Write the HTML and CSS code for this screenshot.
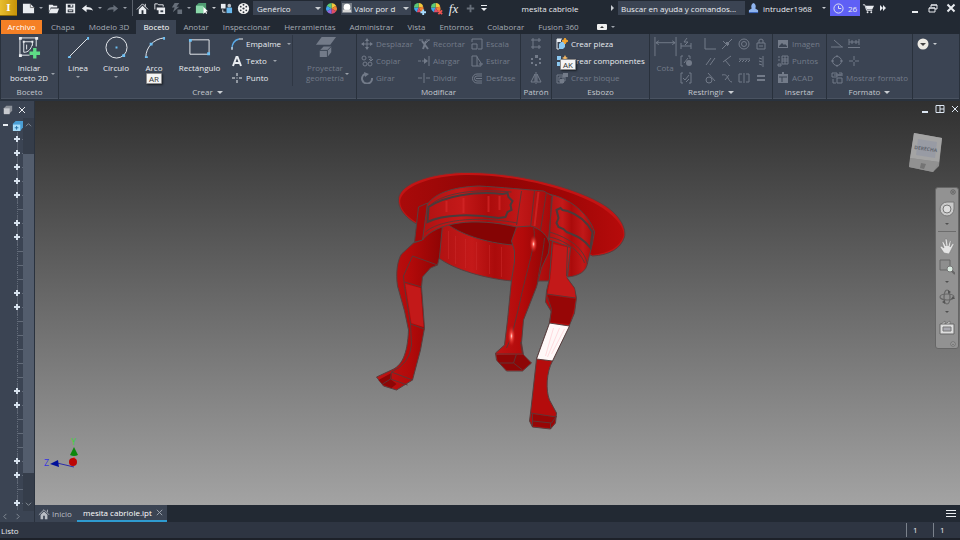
FILE: index.html
```html
<!DOCTYPE html>
<html lang="es">
<head>
    <meta charset="UTF-8">
    <meta name="viewport" content="width=device-width, initial-scale=1.0">
    <title>mesita cabriole</title>
    <link rel="stylesheet" href="styles.css">
</head>
<body>

    <!-- Barra de título -->
    <header class="titlebar">
        <button class="logo" aria-label="Menú">I</button>
        <button class="tool" aria-label="Nuevo"><svg viewBox="0 0 14 14"><path class="solid" d="M1 2h8l4 4v6H1z"/><path d="M9 2v4h4" fill="none" stroke="#777"/></svg></button>
        <span class="caret dim"></span>
        <button class="tool" aria-label="Abrir"><svg viewBox="0 0 14 14"><path class="solid" d="M2 3h4l1 1h4v2H4l-2 5zM4 7h9l-2 5H2z"/></svg></button>
        <button class="tool" aria-label="Guardar"><svg viewBox="0 0 14 14"><path class="solid" fill-rule="evenodd" d="M2 2h10v10H2zM4 3v3h6V3zM4 8v3h6V8z"/><path class="solid" d="M7 3h2v2H7zM5 9h4v1H5z"/></svg></button>
        <button class="tool" aria-label="Deshacer"><svg viewBox="0 0 14 14"><path class="solid" d="M1 7l5-4v2.500c4 0 6 1 7 4-2-1.500-4-1.500-7-1.500v3z"/></svg></button>
        <span class="caret dim"></span>
        <button class="tool off" aria-label="Rehacer"><svg viewBox="0 0 14 14"><path class="solid" d="M13 7L8 3v2.500c-4 0-6 1-7 4 2-1.500 4-1.500 7-1.500v3z"/></svg></button>
        <span class="caret dim"></span>
        <span class="tool-sep"></span>
        <button class="tool" aria-label="Inicio"><svg viewBox="0 0 14 14"><path d="M1 8l6-6 6 6M10 2v3" class="line"/><path class="solid" d="M3 8l4-4 4 4v5H8V9H6v4H3z"/></svg></button>
        <button class="tool" aria-label="Equipo"><svg viewBox="0 0 14 14"><path class="line" d="M2 8V2h3l1 1h5v2"/><path class="solid" d="M4 6h9v7H6V9H4z"/><path d="M8 9h3v2H8z" fill="#333b46"/></svg></button>
        <button class="tool off" aria-label="Actualizar"><svg viewBox="0 0 14 14"><path class="solid" d="M5 1h5L7 5h3l-7 6 2-5H2zM8 8h5v5H8z"/></svg></button>
        <span class="caret dim"></span>
        <button class="tool" aria-label="Seleccionar"><svg viewBox="0 0 14 14"><path d="M1 4l3-3h8v8l-2 3H1z" fill="#4e9b71"/><path d="M1 4h8v8H1z" fill="#8bd9aa"/><path d="M9 5v8l2-2 1 2 1-1-1-2h2z" fill="#fff"/></svg></button>
        <span class="caret"></span>
        <button class="tool" aria-label="Material"><svg viewBox="0 0 14 14"><path class="solid" d="M1 2h5v5H1z"/><circle cx="10" cy="4" r="2" fill="#b8bec5"/><path d="M7 6h6v6H7z" fill="#69b9ee"/><path class="line" d="M3 8v3h3"/></svg></button>
        <button class="tool" aria-label="Apariencia"><svg viewBox="0 0 14 14"><circle cx="7" cy="7" r="6" fill="#f4f4f4"/><g fill="#30363f"><circle cx="7" cy="7" r="1.200"/><circle cx="4" cy="5" r="1"/><circle cx="7" cy="3" r="1"/><circle cx="10" cy="5" r="1"/><circle cx="10" cy="9" r="1"/><circle cx="7" cy="11" r="1"/><circle cx="4" cy="9" r="1"/></g></svg></button>
        <label class="picker"><select aria-label="Material"><option>Genérico</option></select><span class="caret"></span></label>
        <button class="tool" aria-label="Color"><svg viewBox="0 0 14 14"><path d="M7 7V1a6 6 0 0 1 5 3z" fill="#f0c83c"/><path d="M7 7l5-3a6 6 0 0 1 0 6z" fill="#f08233"/><path d="M7 7l5 3a6 6 0 0 1-5 3z" fill="#df4c69"/><path d="M7 7v6a6 6 0 0 1-5-3z" fill="#8c6be0"/><path d="M7 7l-5 3a6 6 0 0 1 0-6z" fill="#3fa3ec"/><path d="M7 7L2 4a6 6 0 0 1 5-3z" fill="#59c976"/></svg></button>
        <label class="picker"><svg class="swatch" viewBox="0 0 12 12"><path d="M0 0h12v12H0z" fill="#777e87"/><circle cx="6" cy="5" r="4" fill="#fff"/><path d="M1 8h10v3H1z" fill="#d5d5d5"/></svg><select aria-label="Apariencia"><option>Valor por d</option></select><span class="caret"></span></label>
        <button class="tool" aria-label="Ajustar"><svg viewBox="0 0 14 14"><path d="M6 6V1a5 5 0 0 1 5 4z" fill="#f0c83c"/><path d="M6 6l5-1a5 5 0 0 1-2 6z" fill="#f08233"/><path d="M6 6l3 5H4z" fill="#df4c69"/><path d="M6 6l-2 5a6 6 0 0 1-3-5z" fill="#3fa3ec"/><path d="M6 6H1a5 5 0 0 1 5-5z" fill="#59c976"/><path d="M8 11h6M11 8v6" stroke="#a7dcff" stroke-width="2"/></svg></button>
        <button class="tool" aria-label="Borrar"><svg viewBox="0 0 14 14"><path d="M6 6V1a5 5 0 0 1 5 4z" fill="#f0c83c"/><path d="M6 6l5-1a5 5 0 0 1-2 6z" fill="#f08233"/><path d="M6 6l3 5H4z" fill="#df4c69"/><path d="M6 6l-2 5a6 6 0 0 1-3-5z" fill="#3fa3ec"/><path d="M6 6H1a5 5 0 0 1 5-5z" fill="#59c976"/><path d="M9 9l4 4M13 9l-4 4" stroke="#ef5350" stroke-width="2"/></svg></button>
        <button class="tool fx" aria-label="Parámetros">fx</button>
        <button class="tool off" aria-label="Añadir"><svg viewBox="0 0 14 14"><path d="M3 7h8M7 3v8" class="line thick"/></svg></button>
        <button class="more" aria-label="Personalizar"><svg viewBox="0 0 8 8"><path class="line" d="M1 1.500h6"/><path class="solid" d="M1 4h6L4 7z"/></svg></button>
        <h1 class="doc-title">mesita cabriole</h1>
        <span class="side-caret"></span>
        <input class="search" type="text" aria-label="Buscar" value="Buscar en ayuda y comandos...">
        <button class="user"><svg viewBox="0 0 12 12"><path d="M6 0a3 4 0 0 1 2 6l3 2v2H1V8l3-2a3 4 0 0 1 2-6z" fill="#8fb4ee"/><path d="M1 10h10v1H1z" fill="#3f6fd0"/></svg>intruder1968<span class="caret"></span></button>
        <button class="trial"><svg viewBox="0 0 12 12"><circle cx="6" cy="6" r="5" class="line"/><path class="line" d="M6 3v3h3"/></svg>26</button>
        <button class="tool cart" aria-label="Tienda"><svg viewBox="0 0 14 14"><path class="line" d="M1 3h2l2 6h6"/><path class="solid" d="M4 4h9l-2 4H5z"/><circle class="solid" cx="6" cy="11" r="1"/><circle class="solid" cx="10" cy="11" r="1"/></svg></button>
        <button class="next" aria-label="Más"><svg viewBox="0 0 8 8"><path class="solid" d="M1 1l3 3-3 3zM4 1l3 3-3 3z"/></svg></button>
        <div class="window-buttons">
            <button aria-label="Minimizar"><svg viewBox="0 0 10 10"><path d="M2 9h6" class="line thick"/></svg></button>
            <button aria-label="Restaurar"><svg viewBox="0 0 10 10"><path d="M3 4V2h6v4H7M1 5h6v4H1zM3 2h6M1 5h6" class="line"/></svg></button>
            <button aria-label="Cerrar"><svg viewBox="0 0 10 10"><path d="M1.500 1.500l7 7M8.500 1.500l-7 7" class="line thick"/></svg></button>
        </div>
    </header>

    <!-- Fichas de la cinta -->
    <nav class="tabs">
        <a class="file" href="#">Archivo</a>
        <a href="#">Chapa</a>
        <a href="#">Modelo 3D</a>
        <a class="active" href="#">Boceto</a>
        <a href="#">Anotar</a>
        <a href="#">Inspeccionar</a>
        <a href="#">Herramientas</a>
        <a href="#">Administrar</a>
        <a href="#">Vista</a>
        <a href="#">Entornos</a>
        <a href="#">Colaborar</a>
        <a href="#">Fusion 360</a>
        <button class="collapse" aria-label="Minimizar cinta"><svg viewBox="0 0 10 6"><rect width="10" height="6" rx="1" fill="#f1f1f1"/><path d="M3 4l2-2 2 2z" fill="#333"/></svg><span class="caret dim"></span></button>
    </nav>

    <!-- Cinta de opciones -->
    <div class="ribbon">
        <section class="panel p-boceto">
            <div class="panel-body">
                <button class="big"><svg viewBox="0 0 24 24"><path class="line" d="M3 2h16v9M2 3v17h10M6 6h9v4M6 6v11M6 17c5 0 7-3 9-8M9 9v5"/><g class="solid"><path d="M1 1h3v3H1zM18 1h3v3h-3zM1 19h3v3H1zM5 5h2v2H5zM14 5h2v2h-2z"/></g><path d="M12 18h11M17.500 12.500v11" stroke="#5edc86" stroke-width="3.500"/></svg>Iniciar<br>boceto 2D</button>
                <span class="caret dim low"></span>
            </div>
            <h2>Boceto</h2>
        </section>

        <section class="panel p-crear">
            <div class="panel-body">
                <button class="big"><svg viewBox="0 0 24 24"><path class="line" d="M2 22L22 2"/><path class="dot" d="M1 21h3v2H1zM21 1h2v3h-2z"/></svg>Línea<span class="caret dim"></span></button>
                <button class="big"><svg viewBox="0 0 24 24"><circle class="line" cx="12" cy="12" r="11"/><path class="dot" d="M11 11h2v2h-2zM18 19h3v3h-3z"/></svg>Círculo<span class="caret dim"></span></button>
                <button class="big arc"><svg viewBox="0 0 24 24"><path class="line" d="M3 22C3 12 11 3 22 2"/><path class="dot" d="M2 21h3v2H2zM7 7h3v3H7zM21 1h2v3h-2z"/></svg>Arco<span class="keytip">AR</span></button>
                <button class="big wide"><svg viewBox="0 0 24 24"><path class="line" d="M2 4h20v15H2z"/><path class="dot" d="M1 3h3v3H1zM20 17h3v3h-3z"/></svg>Rectángulo<span class="caret dim"></span></button>
                <div class="stack">
                    <button><svg viewBox="0 0 12 12"><path d="M1 11C1 5 4 2 8 1" fill="none" stroke="#5aa9e6" stroke-width="1.300"/><path class="line" d="M8 1h4M1 9v3"/></svg>Empalme<span class="caret dim"></span></button>
                    <button><svg viewBox="0 0 12 12"><path class="line thick" d="M2 11L5.500 2h1L10 11M4 8h5"/></svg>Texto<span class="caret dim"></span></button>
                    <button><svg viewBox="0 0 12 12"><path class="line" d="M6 1v3M6 8v3M1 6h3M8 6h3M5.500 6h1"/></svg>Punto</button>
                </div>
                <div class="project off">
                    <button class="big" disabled><svg viewBox="0 0 24 24"><path class="solid" d="M8 1h15l-6 8H2zM6 15l4-4h8v6l-4 5H6z"/><path d="M6 15h8v7M14 15l4-4" fill="none" stroke="#3b4453"/></svg>Proyectar<br>geometría</button>
                    <span class="caret dim low"></span>
                </div>
            </div>
            <h2>Crear <span class="caret"></span></h2>
        </section>

        <section class="panel p-modificar off">
            <div class="panel-body grid">
                <button disabled><svg viewBox="0 0 12 12"><path class="line" d="M6 1v10M1 6h10"/><path class="solid" d="M4 3l2-3 2 3zM4 9l2 3 2-3zM3 4L0 6l3 2zM9 4l3 2-3 2z"/></svg>Desplazar</button>
                <button disabled><svg viewBox="0 0 12 12"><path class="line thick" d="M4 3l6 8M8 3l-3 8"/><path class="line" d="M1 2h4M8 2h4M6 7l5-5"/></svg>Recortar</button>
                <button disabled><svg viewBox="0 0 12 12"><path class="line" d="M1 4V1h10v10H7M1 6h5v5H1z"/></svg>Escala</button>
                <button disabled><svg viewBox="0 0 12 12"><circle class="line" cx="3" cy="3" r="2"/><circle class="line" cx="4" cy="9" r="2"/><circle class="line" cx="9" cy="9" r="2"/><path class="line" d="M7 2h3v3M8 4l2 2 2-2"/></svg>Copiar</button>
                <button disabled><svg viewBox="0 0 12 12"><path class="line" d="M0 6h3M4 6h4M11 1v10"/><path class="solid" d="M6 3l4 3-4 3z"/></svg>Alargar</button>
                <button disabled><svg viewBox="0 0 12 12"><path class="line" d="M1 1h5v10H1zM6 2l4 6v3H6M8 9h4"/></svg>Estirar</button>
                <button disabled><svg viewBox="0 0 12 12"><path class="line thick" d="M4 2a5 5 0 1 0 7 4"/><path class="solid" d="M3 0l5 2-4 3z"/></svg>Girar</button>
                <button disabled><svg viewBox="0 0 12 12"><path class="line" d="M0 6h4M8 6h4M6 1v10"/></svg>Dividir</button>
                <button disabled><svg viewBox="0 0 12 12"><path class="line" d="M11 2H6a4 4 0 0 0 0 9h5M11 4H6a2 2 0 0 0 0 5h5M5 6.500h6"/></svg>Desfase</button>
            </div>
            <h2>Modificar</h2>
        </section>

        <section class="panel p-patron off">
            <div class="panel-body icons">
                <button disabled aria-label="Rectangular"><svg viewBox="0 0 12 12"><path class="line" d="M2 1h2v2H2zM8 1h2v2H8zM2 8h2v2H2zM8 8h2v2H8zM5 2h2M3 4v3M5 9h2"/></svg></button>
                <button disabled aria-label="Circular"><svg viewBox="0 0 12 12"><path class="solid" d="M5 0h3v3H5zM1 3h2v2H1zM9 3h2v2H9zM1 7h2v2H1zM9 7h2v2H9zM5 9h2v2H5z"/></svg></button>
                <button disabled aria-label="Simetría"><svg viewBox="0 0 12 12"><path class="line" d="M5 2v8H1zM7 2v8h4zM6 0v12"/></svg></button>
            </div>
            <h2>Patrón</h2>
        </section>

        <section class="panel p-esbozo">
            <div class="panel-body stack">
                <button><svg viewBox="0 0 12 12"><path class="line" d="M6 1H1v10h2"/><path d="M3 6l2-2h4v5l-2 2H3z" fill="#8bc9f2"/><path class="solid" d="M1 1h4v3H1z"/><path d="M9 0l1 2 2 1-2 1-1 2-1-2-2-1 2-1z" fill="#f9a72b" stroke="#f9a72b"/></svg>Crear pieza</button>
                <button><svg viewBox="0 0 12 12"><path d="M1 1h4v4H1zM1 7h4v4H1z" fill="#8bc9f2"/><path d="M5 6h5v5H5z" fill="#4d9bd2"/><path d="M9 0l1 2 2 1-2 1-1 2-1-2-2-1 2-1z" fill="#f4b865"/></svg>Crear componentes<span class="keytip">AK</span></button>
                <button class="off" disabled><svg viewBox="0 0 12 12"><path class="line" d="M1 3h6v8H1zM3 5h6v4H3z"/><path class="solid" d="M7 1h5v4H7zM4 7h4v4H4z"/></svg>Crear bloque</button>
            </div>
            <h2>Esbozo</h2>
        </section>

        <section class="panel p-restringir off">
            <div class="panel-body">
                <button class="big cota" disabled><svg viewBox="0 0 24 24"><path class="line" d="M1 1v20M23 1v20M2 7h20M5 5L2 7l3 2M19 5l3 2-3 2"/></svg>Cota</button>
                <div class="icons">
                    <button disabled aria-label="Cota automática"><svg viewBox="0 0 12 12"><path class="line" d="M1 5v6M11 5v6M1 8h10M7 0L4 4h4L5 7"/></svg></button>
                    <button disabled aria-label="Mostrar restricciones"><svg viewBox="0 0 12 12"><path class="line" d="M3 1H1v10h2M8 1h2v3M4 8l4-5"/><circle class="solid" cx="9" cy="8" r="3"/></svg></button>
                    <button disabled aria-label="Inferencia"><svg viewBox="0 0 12 12"><path class="line" d="M3 1H1v10h2M9 1h2v10H9M3 6l2 2 4-5M6 10l3-3"/></svg></button>
                </div>
                <div class="icons four">
                    <button disabled aria-label="Coincidente"><svg viewBox="0 0 12 12"><path class="line" d="M1 0v11h11"/></svg></button>
                    <button disabled aria-label="Colineal"><svg viewBox="0 0 12 12"><path class="line" d="M1 11L11 1M2 3l5 5"/><path class="solid" d="M5 4h3v3H5z"/></svg></button>
                    <button disabled aria-label="Concéntrica"><svg viewBox="0 0 12 12"><circle class="line" cx="6" cy="6" r="5"/><circle class="line" cx="6" cy="6" r="2.500"/></svg></button>
                    <button disabled aria-label="Fijar"><svg viewBox="0 0 12 12"><path class="line" d="M2 5h8v6H2zM4 5V2q2-2 4 0v3M4 8h4"/></svg></button>
                    <button disabled aria-label="Paralela"><svg viewBox="0 0 12 12"><path class="line" d="M2 10l5-7M6 10l5-7"/></svg></button>
                    <button disabled aria-label="Perpendicular"><svg viewBox="0 0 12 12"><path class="line" d="M2 7l8-6M4 5l5 6"/></svg></button>
                    <button disabled aria-label="Horizontal"><svg viewBox="0 0 12 12"><path class="line" d="M1 4h11M1 7l2-2M4 7l2-2M7 7l2-2M10 7l2-2"/></svg></button>
                    <button disabled aria-label="Vertical"><svg viewBox="0 0 12 12"><path class="line" d="M8 1v11M4 3l3 1M4 6l3 1M4 9l3 1"/></svg></button>
                    <button disabled aria-label="Tangente"><svg viewBox="0 0 12 12"><circle class="line" cx="5" cy="8" r="3"/><path class="line" d="M4 1l7 8"/></svg></button>
                    <button disabled aria-label="Suave"><svg viewBox="0 0 12 12"><path class="line" d="M1 3c4-1 5 1 6 3s2 4 4 4M4 8l4-5"/></svg></button>
                    <button disabled aria-label="Simétrica"><svg viewBox="0 0 12 12"><path class="line" d="M4 2H1v8h3M8 2h3v8H8M6 1v10"/></svg></button>
                    <button disabled aria-label="Igual"><svg viewBox="0 0 12 12"><path class="line thick" d="M2 4h8M2 8h8"/></svg></button>
                </div>
            </div>
            <h2>Restringir <span class="caret"></span></h2>
        </section>

        <section class="panel p-insertar off">
            <div class="panel-body stack">
                <button disabled><svg viewBox="0 0 12 12"><path class="solid" d="M1 2h10v8H1z"/><path d="M2 8l3-3 2 2 1-1 2 2v1H2z" fill="#3b4453"/></svg>Imagen</button>
                <button disabled><svg viewBox="0 0 12 12"><path class="line" d="M5 1h6v8H5zM5 4h6M5 6h6M8 1v8M1 2h2M1 5h2M1 9h3v2H1z"/></svg>Puntos</button>
                <button disabled><svg viewBox="0 0 12 12"><path class="solid" d="M1 2h4V0h2v2h4v9H1z"/><path d="M2 5h8M5 5v5" stroke="#3b4453"/></svg>ACAD</button>
            </div>
            <h2>Insertar</h2>
        </section>

        <section class="panel p-formato off">
            <div class="panel-body stack">
                <div class="row">
                    <button disabled aria-label="Construcción"><svg viewBox="0 0 12 12"><path class="line" d="M3 2l8 7M0 9h12"/></svg></button>
                    <button disabled aria-label="Cota conducida"><svg viewBox="0 0 12 12"><path class="line" d="M1 1v6M11 1v6M1 4h10M4 2v4M8 2v4M0 9.500h12"/></svg></button>
                </div>
                <div class="row">
                    <button disabled aria-label="Línea de eje"><svg viewBox="0 0 12 12"><circle class="line" cx="6" cy="6" r="4.500"/><path class="line" d="M0 6h3M9 6h3M6 0v2M6 10v2"/></svg></button>
                    <button disabled aria-label="Punto central"><svg viewBox="0 0 12 12"><path class="line" d="M6 1v4M6 7v4M1 6h4M7 6h4"/></svg></button>
                </div>
                <button disabled><svg viewBox="0 0 12 12"><path class="line" d="M1 1h5v4H1zM6 6h5v5H6zM2 7v4h3M8 1h3v3M7 3h4M3 3h7"/></svg>Mostrar formato</button>
            </div>
            <h2>Formato <span class="caret"></span></h2>
        </section>

        <section class="panel p-fin">
            <button class="finish" aria-label="Terminar"><svg viewBox="0 0 12 12"><circle cx="6" cy="6" r="5.500" fill="#eceae4"/><path d="M3 5h6L6 8z" fill="#444"/></svg><span class="caret"></span></button>
        </section>
    </div>

    <div class="workspace">
        <!-- Navegador del modelo -->
        <aside class="browser">
            <div class="browser-head">
                <svg viewBox="0 0 12 12"><path d="M1 4l3-3h7v6l-3 3H1z" fill="#8b9098"/><path d="M1 4h7v7H1z" fill="#c8cbd0"/></svg>
                <button aria-label="Cerrar navegador"><svg viewBox="0 0 10 10"><path class="line" d="M2 2l6 6M8 2l-6 6"/></svg></button>
            </div>
            <div class="browser-body">
                <ul class="tree">
                    <li class="root"><i></i><svg viewBox="0 0 12 12"><path d="M1 4l3-3h8v7l-3 4H1z" fill="#4a9ed4"/><path d="M1 5h8v7H1z" fill="#a6dcfa"/><path d="M3 8.500h4M5 6.500v4" stroke="#226b9e"/></svg></li>
                    <li class="node"></li>
                    <li class="node"></li>
                    <li class="node"></li>
                    <li class="node"></li>
                    <li class="node"></li>
                    <li></li>
                    <li class="node"></li>
                    <li class="node"></li>
                    <li></li>
                    <li></li>
                    <li></li>
                    <li class="node"></li>
                    <li class="node"></li>
                    <li></li>
                    <li></li>
                    <li></li>
                    <li></li>
                    <li></li>
                    <li class="node"></li>
                    <li class="node"></li>
                    <li></li>
                    <li></li>
                    <li></li>
                    <li class="node"></li>
                    <li class="node"></li>
                    <li></li>
                    <li class="node"></li>
                </ul>
                <div class="scroll">
                    <svg viewBox="0 0 8 8"><path class="line" d="M1 6l3-3 3 3"/></svg>
                    <div class="thumb"></div>
                    <svg viewBox="0 0 8 8"><path class="line" d="M1 2l3 3 3-3"/></svg>
                </div>
            </div>
            <div class="browser-foot">
                <svg viewBox="0 0 8 8"><path class="line" d="M5 1L2 4l3 3"/></svg>
                <svg viewBox="0 0 8 8"><path class="line" d="M3 1l3 3-3 3"/></svg>
            </div>
        </aside>

        <main class="stage">
            <div class="canvas">
                <svg class="model" viewBox="36 101 924 404" role="img" aria-label="Mesita">
                    <defs>
                        <linearGradient id="under" x1="0" y1="0" x2="1" y2="0"><stop offset="0" stop-color="#a90a0a"/><stop offset=".4" stop-color="#8e0505"/><stop offset=".75" stop-color="#a00606"/><stop offset="1" stop-color="#b60b0b"/></linearGradient>
                        <linearGradient id="apron" x1="0" y1="0" x2="1" y2="0"><stop offset="0" stop-color="#b01212"/><stop offset=".3" stop-color="#c41919"/><stop offset=".5" stop-color="#ab0b0b"/><stop offset=".75" stop-color="#c01818"/><stop offset="1" stop-color="#a50909"/></linearGradient>
                        <linearGradient id="leg" x1="0" y1="0" x2="1" y2="0"><stop offset="0" stop-color="#bd1515"/><stop offset=".5" stop-color="#b30a0a"/><stop offset="1" stop-color="#8e0404"/></linearGradient>
                        <radialGradient id="shine"><stop offset="0" stop-color="#ffd6d0"/><stop offset=".3" stop-color="#f14a42"/><stop offset="1" stop-color="#c01010" stop-opacity="0"/></radialGradient>
                    </defs>
                    <!-- tablero -->
                    <path class="edge" fill="#c31414" d="M417 224C405 217 398 208 399 198C402 183 430 174 462 172.500C515 171 579 188 606 206C621 216 627 229 625 237C621 249 610 255 593 256L550 235Z"/>
                    <path fill="url(#under)" d="M418 223C406 216 399 207 401 199C406 185 432 176 465 175C515 174 575 190 603 208C619 219 625 229 624 236C620 247 610 253 593 255L550 234Z"/>
                    <!-- interior del faldón -->
                    <path fill="url(#apron)" class="edge" d="M441 222L438 257C454 270 488 279 513 281L550 281L553 240L515 226Z"/>
                    <path fill="#850404" class="edge" d="M448 224C459 233 485 243 514 245L518 225C490 218 465 219 448 224Z"/>
                    <path fill="none" stroke="#cb2a2a" opacity=".5" d="M449 231v28M456 236v28M466 239v29M477 242v28M490 245v29M502 247v30"/>
                    <!-- pata izquierda -->
                    <path class="edge" fill="#a50808" d="M419 207L428 203L425 240L415 242Z"/>
                    <path class="edge" fill="url(#leg)" d="M423 240C428 232 435 226 443 225L440 257L438 265L431 268L423 277L422 287L425 328L421 350L413 380L397 390L384 386L377 377L392 370C402 366 408 355 409 330L405 311L398 286C396 273 398 260 402 254L414 243Z"/>
                    <path fill="#c31919" d="M406 284l15 4 3 39-12-4z"/>
                    <path fill="#8d0606" d="M379 380l13-7v7l5 4-5 4-8-3z"/>
                    <path class="seam" d="M413 256L438 265M405 282L422 287M411 324L425 329M413 256L404 276L405 287L411 324L412 345Q410 364 392 372L413 380M392 372L391 379L408 385M391 379L383 384"/>
                    <!-- pata derecha -->
                    <path class="edge" fill="#b40c0c" d="M553 241L572 247L567 277L575 288L577 298L575 313L570 325L553 361C547 372 546 390 550 400L557 413L556 423L551 429L533 427L530 421L531 413L537 359L550 323L552 312L546 302L547 291L550 278Z"/>
                    <path fill="#c31919" d="M554 244l17 4-4 30 8 11 1 9-28-4 3-16z"/>
                    <path fill="#970606" d="M548 295l28 4-2 12-4 13-19-2 1-10zM532 414l24 3-1 6-4 5-18-2z"/>
                    <path class="seam" d="M547 294L576 298M531 413L557 417M533 421L552 423L557 416M533 414L533 427M551 423V429M548 297L552 309L550 323"/>
                    <path class="edge" fill="#fff8f8" d="M550 323L570 326L553 361L537 359Z"/>
                    <path fill="none" stroke="#ffdce0" d="M554 328l-8 28M560 328l-12 29M565 329l-13 25"/>
                    <!-- faldón derecho -->
                    <path class="edge" fill="url(#apron)" d="M549 194C570 198 589 213 595 232L593 243L588 263C587 271 580 276 568 277L571 247L550 240Z"/>
                    <path class="seam" d="M550 232C570 238 584 248 588 264M550 237C569 241 582 254 585 263M568 247L567 276"/>
                    <path class="groove" d="M557 210l4-2 2 2 5 1c12 4 20 12 25 21l-2 16c-7-9-13-12-24-16l-3-3-5-2-2-4 2-5z"/>
                    <!-- faldón izquierdo y poste -->
                    <path class="edge" fill="url(#apron)" d="M423 240L428 204C437 192 455 187 479 186C500 187 530 190 544 191L553 196L549 240L517 227C475 217 437 222 423 240Z"/>
                    <path class="seam" d="M426 232C438 221 474 215 518 223M429 207C440 194 472 188 512 192M522 191L517 225M535 191L531 228M547 192L541 230M552 197L550 238"/>
                    <path fill="none" stroke="#d42828" stroke-width="2" opacity=".7" d="M539 192L535 226M447 201V212M464 198V213M489 196V212M500 196V210"/>
                    <path class="groove" d="M429 207C445 196 475 191 503 194l5-1 1 4 4 4-2 4 1 5-4 2-2 5-7 1C474 214 444 214 428 222z"/>
                    <!-- pata central -->
                    <path class="edge" fill="url(#leg)" d="M517 227L531 226C540 228 549 236 550 244L549 253L542 268L537 287L524 320L522 343L524 355L532 363L523 371L507 371L497 360L496 353L505 345L508 320L512 280L515 262L515 251L512 241Z"/>
                    <path fill="#8d0606" d="M497 355l20 0 7 0 7 8-8 7h-16l-9-9z"/>
                    <path class="seam" d="M534 228C538 240 527 270 520 304L512 337L507 348M545 238C543 257 540 268 538 282M521 342L523 354L517 354L496 354M517 354L514 363L500 363M514 363L523 370"/>
                    <ellipse cx="534" cy="244" rx="4" ry="9" fill="url(#shine)"/>
                    <ellipse cx="512" cy="336" rx="4" ry="11" fill="url(#shine)"/>
                </svg>

                <svg class="axes" viewBox="0 0 40 34">
                    <path d="M31 28L14 24" stroke="#2c2ca8"/>
                    <path d="M7 25l8-4 1 7z" fill="#00109a"/>
                    <path d="M31 23V18" stroke="#e45b45" stroke-width="2"/>
                    <path d="M27 16l4-8 4 8q-4 2-8 0z" fill="#0c870c"/>
                    <circle cx="30" cy="23" r="4" fill="#bd0505"/>
                    <text x="28" y="6" fill="#3ad63a">Y</text>
                    <text x="1" y="27" fill="#3434e0">Z</text>
                </svg>

                <div class="view-buttons">
                    <button aria-label="Minimizar vista"><svg viewBox="0 0 10 10"><path class="line thick" d="M2 8h6"/></svg></button>
                    <button aria-label="Mosaico"><svg viewBox="0 0 10 10"><path class="line" d="M1 1.500h8v7H1zM5 1.500v7M5 5h4"/></svg></button>
                    <button aria-label="Cerrar vista"><svg viewBox="0 0 10 10"><path class="line" d="M2 2l6 6M8 2l-6 6"/></svg></button>
                </div>

                <svg class="cube" viewBox="0 0 36 42">
                    <path d="M6 2L34 7L31 35L25 41L1 36Z" fill="#8b8b8b"/>
                    <path d="M6 2L34 7L31 31L2 27Z" fill="#a4a4a4"/>
                    <path d="M10 8l19 3-2 16-19-3z" fill="#989ba4"/>
                    <path d="M2 27l-1 9 24 5 6-10z" fill="#919191"/>
                    <path d="M13 32l5 1-2 5-4-1z" fill="#747474"/>
                    <text x="6" y="18" transform="rotate(8 6 18)">DERECHA</text>
                </svg>

                <div class="navbar">
                    <svg class="pin" viewBox="0 0 8 8"><circle cx="4" cy="4" r="3" fill="none" stroke="#555"/><path d="M3 3l2 2M5 3L3 5" stroke="#555"/></svg>
                    <button aria-label="Rueda de navegación"><svg viewBox="0 0 16 16"><path d="M8 1h7v7a7 7 0 1 1-7-7z" fill="#c9c9c9" stroke="#777"/><circle cx="8" cy="8" r="4" fill="#ddd" stroke="#777"/></svg></button>
                    <span class="caret"></span>
                    <hr>
                    <button aria-label="Encuadre"><svg viewBox="0 0 16 16"><path d="M5 15L1 9l1-1 3 2-2-6 1-1 3 5-1-7h2l1 7 2-6 1 1-1 6 3-4 1 1-3 6-2 4z" fill="#e4e4e4" stroke="#777" stroke-width=".5"/></svg></button>
                    <button aria-label="Zoom"><svg viewBox="0 0 16 16"><path d="M1 1h10v10H1z" fill="#8e8e8e" stroke="#666"/><circle cx="11" cy="10" r="3" fill="#dcebe2" stroke="#777"/><path d="M13 12l3 3" stroke="#666" stroke-width="2"/></svg></button>
                    <span class="caret"></span>
                    <button aria-label="Órbita"><svg viewBox="0 0 16 16"><g fill="none" stroke="#666" stroke-width="1.200"><ellipse cx="8" cy="8" rx="7" ry="3"/><ellipse cx="8" cy="8" rx="3" ry="7"/></g><path d="M9 1l3 2-3 2zM14 7l2 3h-4zM6 11l-3 2 3 2z" fill="#555"/></svg></button>
                    <span class="caret"></span>
                    <button aria-label="Mirar a"><svg viewBox="0 0 16 16"><path d="M2 5l4-3v3l5-3v3" fill="#ddd" stroke="#777"/><path d="M1 5h14v10H1z" fill="#ddd" stroke="#666"/><path d="M4 8h8v4H4z" fill="#a9a9b0" stroke="#777"/></svg></button>
                    <svg class="pin" viewBox="0 0 8 8"><circle cx="4" cy="4" r="3" fill="#aaa" stroke="#666"/><path d="M2.500 3.500h3L4 5.500z" fill="#555"/></svg>
                </div>
            </div>

            <div class="doc-tabs">
                <a class="home" href="#"><svg viewBox="0 0 14 14"><path d="M1 8l6-6 6 6M11 2v3" class="line"/><path class="solid" d="M3 8l4-4 4 4v5H8V9H6v4H3z"/></svg>Inicio</a>
                <a class="current" href="#">mesita cabriole.ipt<svg viewBox="0 0 10 10"><path class="line" d="M2 2l6 6M8 2l-6 6"/></svg></a>
                <button aria-label="Lista de documentos"><svg viewBox="0 0 12 10"><path class="line" d="M1 1.500h10M1 4.500h10M1 7.500h10"/></svg></button>
            </div>
        </main>
    </div>

    <footer class="status">
        <span class="state">Listo</span>
        <span class="count">1</span>
        <span class="count">1</span>
    </footer>

</body>
</html>
```
FILE: styles.css
```css
* {
    box-sizing: border-box;
}
body {
    margin: 0;
    height: 100vh;
    display: flex;
    flex-direction: column;
    overflow: hidden;
    background: #222933;
    color: #e9ecf0;
    font-family: "Open Sans", "Noto Sans", sans-serif;
    font-size: 8px;
    line-height: 11px;
}
button, input, select {
    font: inherit;
    color: inherit;
    background: none;
    border: none;
    padding: 0;
    margin: 0;
}
a {
    color: inherit;
    text-decoration: none;
}
h1, h2 {
    margin: 0;
    font-size: 8px;
    font-weight: normal;
}
svg {
    display: block;
    flex: none;
}
.line {
    fill: none;
    stroke: currentColor;
    stroke-width: 1;
}
.line.thick {
    stroke-width: 2;
}
.solid {
    fill: currentColor;
}
.dot {
    fill: #6cc0f5;
}
.caret {
    flex: none;
    display: inline-block;
    width: 0;
    height: 0;
    border: 3px solid transparent;
    border-top-color: #c9cdd2;
    border-bottom: none;
}
.caret.dim {
    border-width: 2px;
    border-top-color: #9ba1aa;
    border-bottom: none;
}
.keytip {
    position: absolute;
    padding: 0 2px;
    background: #f4f4f4;
    border: 1px solid #8d8d8d;
    border-radius: 1px;
    box-shadow: 1px 1px 2px #1a1f26;
    color: #333;
    line-height: 9px;
}

/* barra de título */
.titlebar {
    display: flex;
    align-items: center;
    height: 16px;
    flex: none;
}
.logo {
    width: 17px;
    height: 16px;
    margin-right: 3px;
    background: linear-gradient(90deg, #e8be2f, #c79308);
    border-bottom: 1px solid #8c6905;
    color: #fff;
    font-family: "Liberation Serif", serif;
    font-size: 11px;
    font-weight: bold;
}
.tool {
    width: 17px;
    display: flex;
    justify-content: center;
}
.tool svg {
    width: 13px;
    height: 13px;
}
.tool.off {
    color: #666e79;
}
.titlebar > .caret {
    margin: 0 2px;
    border-width: 2px;
    border-bottom: none;
}
.tool-sep {
    width: 1px;
    height: 16px;
    margin: 0 1px 0 3px;
    background: #5b626c;
}
.picker {
    display: flex;
    align-items: center;
    width: 70px;
    height: 14px;
    padding: 0 2px 0 4px;
    margin: 0 0 0 1px;
    background: #3b4453;
}
.picker select {
    flex: 1;
    min-width: 0;
    appearance: none;
}
.picker .swatch {
    width: 10px;
    height: 10px;
    margin: 0 2px 0 -3px;
}
.fx {
    font-family: "Liberation Serif", serif;
    font-style: italic;
    font-size: 13px;
}
.more {
    width: 10px;
    display: flex;
    justify-content: center;
}
.more svg, .next svg {
    width: 8px;
    height: 8px;
}
.doc-title {
    flex: 1;
    text-align: center;
}
.side-caret {
    border: 3px solid transparent;
    border-left-color: #c9cdd2;
    border-right: none;
    margin-right: 4px;
}
.search {
    width: 127px;
    height: 14px;
    padding: 0 3px;
    background: #3b4453;
}
.user {
    display: flex;
    align-items: center;
    gap: 4px;
    width: 82px;
    padding-left: 3px;
}
.user svg {
    width: 11px;
    height: 11px;
}
.user .caret {
    margin-left: auto;
    margin-right: 1px;
    border-width: 2px;
    border-bottom: none;
}
.trial {
    display: flex;
    align-items: center;
    justify-content: center;
    gap: 4px;
    width: 30px;
    height: 16px;
    margin-left: 3px;
    background: #5f60f5;
}
.trial svg {
    width: 11px;
    height: 11px;
}
.next {
    width: 12px;
    padding-left: 2px;
}
.window-buttons {
    display: flex;
    gap: 8px;
    margin: 0 4px 0 21px;
}
.window-buttons svg {
    width: 10px;
    height: 10px;
}

/* fichas */
.tabs {
    display: flex;
    align-items: stretch;
    height: 18px;
    padding: 4px 0 0 1px;
    flex: none;
    color: #a6abb3;
    line-height: 13px;
}
.tabs a {
    padding: 0 7px;
}
.tabs .file {
    width: 41px;
    padding: 0;
    margin-right: 2px;
    text-align: center;
    background: #f58025;
    color: #fff;
}
.tabs .active {
    background: #3b4453;
    color: #fff;
}
.collapse {
    display: flex;
    align-items: center;
    gap: 4px;
    margin-left: 11px;
}
.collapse svg {
    width: 10px;
    height: 6px;
}

/* cinta */
.ribbon {
    display: flex;
    height: 67px;
    flex: none;
    padding: 0 1px;
    gap: 1px;
    background: #29313c;
    border-bottom: 2px solid #29323e;
}
.panel {
    display: flex;
    flex-direction: column;
    background: #3b4453;
    border-bottom: 1px solid #4a5361;
}
.panel button {
    white-space: nowrap;
}
.panel-body {
    display: flex;
    flex: 1;
    min-height: 0;
    padding-top: 1px;
}
.panel h2 {
    flex: none;
    height: 12px;
    text-align: center;
    color: #c3c7cd;
}
.panel h2 .caret {
    margin-left: 2px;
    vertical-align: 1px;
}
.off {
    color: #737b89;
}
.p-boceto { width: 57px; }
.p-crear { width: 297px; }
.p-modificar { width: 163px; }
.p-patron { width: 30px; }
.p-esbozo { width: 97px; }
.p-restringir { width: 122px; }
.p-insertar { width: 53px; }
.p-formato { width: 85px; }
.p-fin { flex: 1; }
.big {
    position: relative;
    display: flex;
    flex-direction: column;
    align-items: center;
    width: 38px;
    line-height: 10px;
}
.big svg {
    width: 23px;
    height: 23px;
    margin: 1px 0 4px;
}
.big .caret {
    margin-top: 3px;
}
.p-boceto .big {
    width: 50px;
    padding-left: 6px;
}
.big.wide {
    width: 53px;
}
.caret.low {
    margin-top: 38px;
}
.arc .keytip {
    top: 38px;
    left: 11px;
}
.stack {
    display: flex;
    flex-direction: column;
    align-items: flex-start;
}
.stack button, .grid button {
    position: relative;
    display: flex;
    align-items: center;
    gap: 3px;
    height: 17px;
}
.stack svg, .grid svg, .icons svg {
    width: 12px;
    height: 12px;
}
.stack .caret {
    margin-left: 3px;
}
.p-crear .stack {
    width: 67px;
    padding-left: 5px;
    border-right: 1px solid #2f3744;
}
.project {
    display: flex;
    margin-left: 12px;
}
.project .big {
    width: 40px;
}
.grid {
    display: grid;
    grid-template-columns: 57px 53px 50px;
    grid-auto-rows: 17px;
    padding-left: 4px;
}
.icons {
    display: grid;
    grid-auto-rows: 17px;
    justify-content: center;
    align-content: start;
}
.icons button {
    display: flex;
    align-items: center;
    justify-content: center;
}
.icons.four {
    grid-template-columns: repeat(4, 17px);
    margin-left: 9px;
}
.p-esbozo .stack, .p-insertar .stack, .p-formato .stack {
    padding-left: 4px;
}
.p-esbozo .keytip {
    top: 7px;
    left: 4px;
}
.cota {
    width: 30px;
}
.row {
    display: flex;
    gap: 5px;
}
.finish {
    display: flex;
    align-items: center;
    gap: 4px;
    padding: 4px 0 0 4px;
}
.finish svg {
    width: 12px;
    height: 12px;
}
.finish .caret {
    border-width: 2px;
    border-bottom: none;
}

/* navegador */
.workspace {
    display: flex;
    flex: 1;
    min-height: 0;
}
.browser {
    display: flex;
    flex-direction: column;
    width: 35px;
    background: #3b4453;
    border-right: 1px solid #2a323e;
}
.browser-head {
    display: flex;
    align-items: center;
    gap: 4px;
    height: 17px;
    width: 31px;
    padding-left: 3px;
    flex: none;
}
.browser-head svg {
    width: 10px;
    height: 10px;
}
.browser-body {
    display: flex;
    flex: 1;
    min-height: 0;
}
.tree {
    width: 23px;
    margin: 0;
    padding: 0;
    list-style: none;
    overflow: hidden;
}
.tree li {
    height: 14px;
    margin-left: 17px;
    border-left: 1px dotted #626b79;
    background: linear-gradient(#626b79, #626b79) 0 7px / 5px 1px no-repeat;
}
.tree .node {
    margin-left: 14px;
    border: none;
    background:
        linear-gradient(#d7e2ee, #d7e2ee) 0 6px / 6px 2px no-repeat,
        linear-gradient(#d7e2ee, #d7e2ee) 2px 4px / 2px 6px no-repeat,
        linear-gradient(#626b79, #626b79) 8px 7px / 1px 1px no-repeat,
        linear-gradient(#59616f, #59616f) 3px 0 / 1px 14px no-repeat;
}
.tree .root {
    display: flex;
    align-items: center;
    gap: 4px;
    margin: 0;
    padding-left: 3px;
    border: none;
    background: none;
}
.root i {
    width: 5px;
    height: 2px;
    background: #e8edf2;
}
.root svg {
    width: 11px;
    height: 11px;
}
.scroll {
    display: flex;
    flex-direction: column;
    align-items: center;
    flex: 1;
    padding: 3px 0;
    background: #353d4a;
    color: #8b929d;
}
.scroll svg, .browser-foot svg {
    width: 7px;
    height: 7px;
}
.thumb {
    width: 100%;
    flex: 1;
    margin: 26px 0 28px;
    background: #535d6d;
}
.browser-foot {
    display: flex;
    gap: 5px;
    height: 11px;
    padding: 2px;
    color: #8b929d;
}

/* área gráfica */
.stage {
    display: flex;
    flex-direction: column;
    flex: 1;
    min-width: 0;
}
.canvas {
    position: relative;
    flex: 1;
    min-height: 0;
    background: linear-gradient(#303030, #a3a3a3);
}
.model {
    width: 100%;
    height: 100%;
}
.edge {
    stroke: #574040;
    stroke-width: 1;
}
.seam {
    fill: none;
    stroke: #603434;
    stroke-width: 1;
}
.groove {
    fill: none;
    stroke: #493b3b;
    stroke-width: 2;
}
.axes {
    position: absolute;
    left: 8px;
    bottom: 32px;
    width: 40px;
    height: 34px;
    overflow: visible;
    font-size: 9px;
}
.view-buttons {
    position: absolute;
    top: 3px;
    right: 0;
    display: flex;
    gap: 5px;
    color: #dce6f2;
}
.view-buttons svg {
    width: 10px;
    height: 10px;
}
.cube {
    position: absolute;
    top: 30px;
    right: 16px;
    width: 36px;
    height: 42px;
}
.cube text {
    font-size: 5px;
    font-weight: bold;
    fill: #62666f;
}
.navbar {
    position: absolute;
    top: 86px;
    right: 1px;
    display: flex;
    flex-direction: column;
    align-items: center;
    justify-content: space-between;
    width: 24px;
    height: 162px;
    padding: 1px 2px;
    background: #929292;
    border: 1px solid #666;
    border-radius: 3px;
}
.navbar button svg {
    width: 16px;
    height: 16px;
}
.navbar .caret {
    border-width: 2px;
    border-top-color: #505050;
    border-bottom: none;
}
.navbar hr {
    width: 100%;
    margin: 0;
    border: none;
    border-top: 1px solid #6d6d6d;
}
.pin {
    width: 6px;
    height: 6px;
    align-self: flex-end;
}

/* documentos */
.doc-tabs {
    display: flex;
    height: 17px;
    flex: none;
    line-height: 15px;
}
.doc-tabs a {
    display: flex;
    align-items: center;
    gap: 2px;
    background: #3b4453;
}
.doc-tabs .home {
    width: 42px;
    padding-left: 3px;
    color: #b9bec5;
}
.doc-tabs .home svg {
    width: 12px;
    height: 12px;
}
.doc-tabs .current {
    padding: 0 3px 0 6px;
    gap: 3px;
    border-bottom: 2px solid #2f9bd0;
    color: #fff;
}
.doc-tabs .current svg {
    width: 9px;
    height: 9px;
    color: #a3a9b2;
}
.doc-tabs button {
    margin-left: auto;
    margin-right: 3px;
}
.doc-tabs button svg {
    width: 12px;
    height: 10px;
}

/* barra de estado */
.status {
    display: flex;
    height: 18px;
    flex: none;
    background: #2e3542;
    border-bottom: 2px solid #1d2129;
    line-height: 17px;
}
.state {
    flex: 1;
    padding-left: 1px;
}
.count {
    width: 27px;
    margin: 1px 0;
    padding-left: 6px;
    border-left: 1px solid #7b828c;
    line-height: 14px;
}
```
